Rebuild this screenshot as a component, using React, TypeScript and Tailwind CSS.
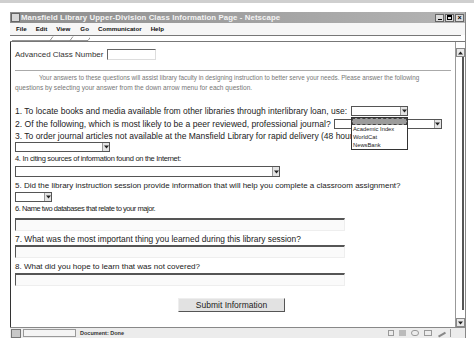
import React from "react";

const F = { fontFamily: '"Liberation Sans", Arial, sans-serif' };

function Select({ w, className = "" }: { w: number; className?: string }) {
  return (
    <div
      className={`relative h-[10px] border border-[#555] bg-white flex justify-end ${className}`}
      style={{ width: w }}
    >
      <div className="w-[7px] h-full bg-[#e4e4e4] border-l border-[#999] flex items-center justify-center">
        <svg width="5" height="4" viewBox="0 0 5 4">
          <path d="M0 0.5h5L2.5 3.5z" fill="#222" />
        </svg>
      </div>
    </div>
  );
}

function TextBox() {
  return <div className="h-[13px] w-[330px] bg-[#fafafa] border-t-2 border-l border-[#555] border-r border-r-[#eee] border-b border-b-[#eee]" />;
}

function Q({ children, className = "" }: { children: React.ReactNode; className?: string }) {
  return (
    <div className={`h-[12px] flex items-center leading-[12px] text-[#222] whitespace-nowrap ${className}`}>
      {children}
    </div>
  );
}

export default function App() {
  return (
    <div className="w-[474px] h-[349px] bg-white overflow-hidden relative" style={F}>
      <div className="h-[3px] bg-[#cfcfcf]" />
      <div className="ml-[10px] mt-[9px] w-[456px] h-[326px] flex flex-col border-r border-[#888]">
        {/* title bar */}
        <div className="h-[11px] bg-gradient-to-r from-[#8e8e8e] to-[#b4b4b4] flex items-center pl-[1px] pr-[1px]">
          <div className="w-[9px] h-[9px] bg-[#d8d8d8] border border-[#666] mr-[1px]" />
          <span className="text-[7.8px] font-bold text-[#f4f4f4] tracking-[0.1px] whitespace-nowrap">
            Mansfield Library Upper-Division Class Information Page - Netscape
          </span>
          <div className="ml-auto flex gap-[1px]">
            <div className="w-[9px] h-[8px] bg-[#dcdcdc] border border-[#666] flex items-end justify-center pb-[1px]">
              <div className="w-[4px] h-[1px] bg-black" />
            </div>
            <div className="w-[9px] h-[8px] bg-[#dcdcdc] border border-[#666] flex items-center justify-center">
              <div className="w-[5px] h-[5px] border border-black border-t-2" />
            </div>
            <div className="w-[9px] h-[8px] bg-[#dcdcdc] border border-[#666] flex items-center justify-center text-[7px] leading-none font-bold">
              ×
            </div>
          </div>
        </div>
        {/* menu bar */}
        <div className="h-[12px] bg-[#f6f6f6] flex items-center pl-[6px] text-[6.2px] font-bold text-[#111]">
          <span className="mr-[9px]">File</span>
          <span className="mr-[9px]">Edit</span>
          <span className="mr-[10px]">View</span>
          <span className="mr-[9px]">Go</span>
          <span className="mr-[9px]">Communicator</span>
          <span>Help</span>
        </div>
        <div className="h-[1px] bg-[#777] mr-[4px]" />
        <div className="h-[5px] bg-white">
          <svg width="80" height="5" viewBox="0 0 80 5">
            <path d="M2 4.5h76M40 4.5l3-4M60 4.5l3-4M78 4.5l3-4" stroke="#777" strokeWidth="0.8" fill="none" />
          </svg>
        </div>
        {/* content + scrollbar */}
        <div className="flex-1 flex border-t border-[#777]">
          <div className="flex-1 relative bg-white border-l border-[#333] pl-[4px] flex flex-col">
            <div className="mt-[7px] h-[11px] flex items-center text-[8px] text-[#333]">
              <span>Advanced Class Number</span>
              <div className="ml-[4px] w-[49px] h-[11px] border-t border-l border-[#666] border-r border-b border-r-[#ddd] border-b-[#ddd] bg-white" />
            </div>
            <div className="mt-[10px] h-[1px] bg-[#aaa] w-[436px]" />
            <div className="mt-[2px] leading-[10px] text-[#777] w-[440px]">
              <div className="pl-[24px] whitespace-nowrap text-[6.3px]">
                Your answers to these questions will assist library faculty in designing instruction to better serve your needs. Please answer the following
              </div>
              <div className="whitespace-nowrap text-[6.6px]">questions by selecting your answer from the down arrow menu for each question.</div>
            </div>
            <Q className="mt-[12px] text-[8.5px]">
              <span>1. To locate books and media available from other libraries through interlibrary loan, use:</span>
              <div className="ml-[4px] relative">
                <Select w={57} />
                <div className="absolute left-0 top-[11px] w-[57px] border border-[#333] bg-white z-10 text-[5.8px] leading-[8px] text-[#222]">
                  <div className="h-[7px] bg-[#9c9c9c] border border-dashed border-[#444]" />
                  <div className="pl-[1px]">Academic Index</div>
                  <div className="pl-[1px]">WorldCat</div>
                  <div className="pl-[1px]">NewsBank</div>
                </div>
              </div>
            </Q>
            <Q className="mt-[1px] text-[8.6px]">
              <span>2. Of the following, which is most likely to be a peer reviewed, professional journal?</span>
              <Select w={108} className="ml-[3px]" />
            </Q>
            <Q className="text-[8.5px]">
              <span>3. To order journal articles not available at the Mansfield Library for rapid delivery (48 hours), use:</span>
            </Q>
            <Select w={95} />
            <Q className="mt-[1px] text-[7.5px] tracking-[-0.3px]">
              <span>4. In citing sources of information found on the Internet:</span>
            </Q>
            <Select w={265} className="mt-[1px] !h-[11px]" />
            <Q className="mt-[3px] text-[8px]">
              <span>5. Did the library instruction session provide information that will help you complete a classroom assignment?</span>
            </Q>
            <Select w={37} />
            <Q className="mt-[1px] text-[7.5px] tracking-[-0.45px]">
              <span>6. Name two databases that relate to your major.</span>
            </Q>
            <div className="mt-[3px]"><TextBox /></div>
            <Q className="mt-[2px] text-[8.4px]">
              <span>7. What was the most important thing you learned during this library session?</span>
            </Q>
            <TextBox />
            <Q className="mt-[3px] text-[8px]">
              <span>8. What did you hope to learn that was not covered?</span>
            </Q>
            <TextBox />
            <div className="mt-[12px] ml-[163px] w-[107px] h-[14px] bg-[#e2e2e2] border border-[#eee] border-r-[#555] border-b-[#555] flex items-center justify-center text-[8.5px] text-[#222]">
              Submit Information
            </div>
          </div>
          {/* scrollbar */}
          <div className="w-[10px] bg-white border-l border-[#999] flex flex-col">
            <div className="h-[9px] mt-[6px] bg-[#e8e8e8] border border-[#888] flex items-center justify-center">
              <svg width="5" height="4" viewBox="0 0 5 4"><path d="M0 3.5h5L2.5 0.5z" fill="#222" /></svg>
            </div>
            <div className="flex-1 border-r-2 border-[#555] mr-[1px] mb-[8px]" />
            <div className="h-[9px] bg-[#e8e8e8] border border-[#888] flex items-center justify-center">
              <svg width="5" height="4" viewBox="0 0 5 4"><path d="M0 0.5h5L2.5 3.5z" fill="#222" /></svg>
            </div>
          </div>
        </div>
        {/* status bar */}
        <div className="h-[11px] bg-[#ececec] border-t border-[#888] flex items-center text-[5.5px] font-bold text-[#333]">
          <div className="w-[10px] h-[9px] bg-[#c8c8c8] border border-[#777] ml-[1px]" />
          <div className="w-[53px] h-[8px] border border-[#999] bg-[#f4f4f4] ml-[2px]" />
          <span className="ml-[4px]">Document: Done</span>
          <div className="ml-auto flex items-center gap-[5px] mr-[3px] text-[#888]">
            <div className="w-[6px] h-[6px] border border-[#999]" />
            <div className="w-[7px] h-[6px] bg-[#bbb]" />
            <div className="w-[8px] h-[6px] border border-[#999] rounded-sm" />
            <div className="w-[8px] h-[6px] border border-[#999]" />
            <div className="w-[8px] h-[6px] border-b-2 border-[#888] rotate-[-30deg]" />
            <div className="w-[1px] h-[8px] bg-[#999]" />
            <div className="w-[6px] h-[6px]" />
          </div>
        </div>
      </div>
    </div>
  );
}
